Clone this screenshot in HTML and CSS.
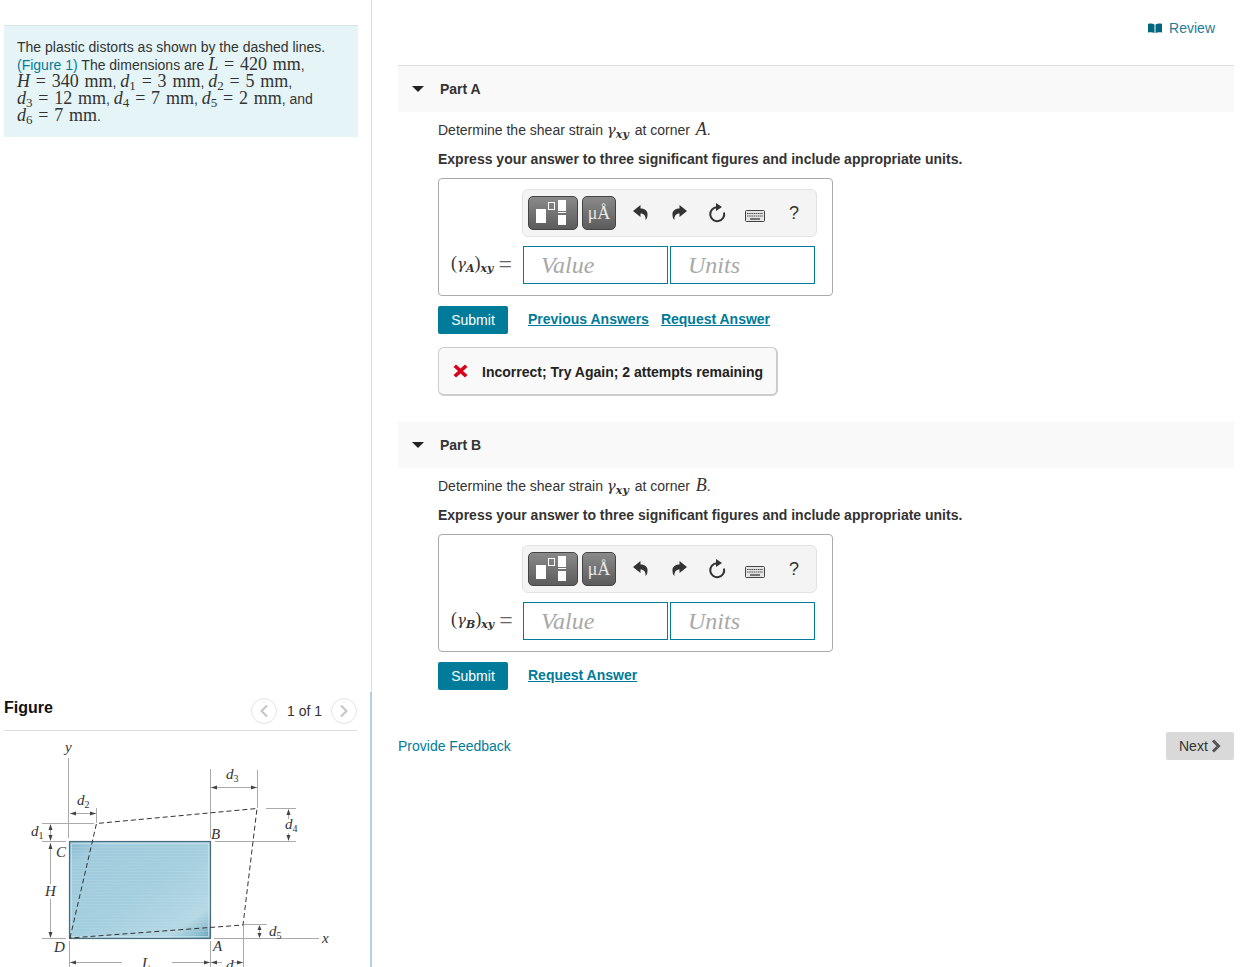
FILE: index.html
```html
<!DOCTYPE html>
<html lang="en">
<head>
    <meta charset="UTF-8">
    <title>Part A - Shear strain</title>
    <link rel="stylesheet" href="styles.css">
</head>
<body>
    <div class="page">
        <div class="left-col">
            <div class="intro">
                <div>The plastic distorts as shown by the dashed lines.</div>
                <div><a href="#" class="plain-link">(Figure 1)</a> The dimensions are <span class="m"><i>L</i> = 420 mm</span>,</div>
                <div><span class="m"><i>H</i> = 340 mm</span>, <span class="m"><i>d</i><sub>1</sub> = 3 mm</span>, <span class="m"><i>d</i><sub>2</sub> = 5 mm</span>,</div>
                <div><span class="m"><i>d</i><sub>3</sub> = 12 mm</span>, <span class="m"><i>d</i><sub>4</sub> = 7 mm</span>, <span class="m"><i>d</i><sub>5</sub> = 2 mm</span>, and</div>
                <div><span class="m"><i>d</i><sub>6</sub> = 7 mm</span>.</div>
            </div>

            <div class="figure-box">
                <div class="figure-head">
                    <h2>Figure</h2>
                    <div class="pager">
                        <span class="pager-btn"><svg width="10" height="14" viewBox="0 0 10 14"><path d="M8 1.500 2.500 7 8 12.500" fill="none" stroke="#c4c4c4" stroke-width="2"/></svg></span>
                        <span class="pager-text">1 of 1</span>
                        <span class="pager-btn"><svg width="10" height="14" viewBox="0 0 10 14"><path d="M2 1.500 7.500 7 2 12.500" fill="none" stroke="#c4c4c4" stroke-width="2"/></svg></span>
                    </div>
                </div>
                <svg class="diagram" width="368" height="227" viewBox="0 740 368 227">
                    <defs>
                        <linearGradient id="plate" x1="0" y1="0" x2="1" y2="1">
                            <stop offset="0" stop-color="#86b9ce"/>
                            <stop offset="0.12" stop-color="#9fcbdc"/>
                            <stop offset="0.5" stop-color="#a3cede"/>
                            <stop offset="0.84" stop-color="#b5d8e4"/>
                            <stop offset="0.93" stop-color="#8fbfd1"/>
                            <stop offset="1" stop-color="#5f9ab2"/>
                        </linearGradient>
                        <pattern id="grain" width="6" height="3" patternUnits="userSpaceOnUse">
                            <path d="M0 1.500H6" stroke="#c3e0ea" stroke-width="1" opacity="0.2"/>
                        </pattern>
                    </defs>
                    <rect x="70" y="842" width="140" height="96" fill="url(#plate)"/>
                    <rect x="70" y="842" width="140" height="96" fill="url(#grain)"/>
                    <rect x="71.500" y="843.500" width="137" height="93" fill="none" stroke="#c5e2eb" stroke-width="1" opacity="0.8"/>
                    <rect x="69.500" y="841.500" width="141" height="97" fill="none" stroke="#4a6c7c" stroke-width="1.200"/>
                    <g fill="none" stroke="#aaa" stroke-width="1">
                        <path d="M68.500 758V838M69.500 941V967M210.500 769V838M210.500 941V967M243.500 925V967M257.500 770V808M96.500 808V823"/>
                        <path d="M42 938.500H66M214 938.500H319M215 841.500H296M266 808.500H296M42 823.500H94M42 841.500H66M243 924.500H267"/>
                        <path d="M50.500 825V840M50.500 843V884M50.500 899V937M288.500 810V819M288.500 833V840M259.500 926V937"/>
                        <path d="M211 787.500H257M70 813.500H96M70 962.500H122M172 962.500H210M211 962.500H222M233 962.500H243"/>
                    </g>
                    <g fill="#444">
                        <path d="M211 787.500l6-2v4zM257 787.500l-6-2v4zM70 813.500l6-2v4zM96 813.500l-6-2v4zM50.500 824l-2 6h4zM50.500 841l-2-6h4zM50.500 843l-2 6h4zM50.500 938l-2-6h4zM288.500 809l-2 6h4zM288.500 841l-2-6h4zM259.500 925l-2 5h4zM259.500 938l-2-5h4zM70 962.500l6-2v4zM210 962.500l-6-2v4zM211 962.500l6-2v4zM243 962.500l-6-2v4z"/>
                    </g>
                    <path d="M70 938 96.500 823.500 257 808.500 243 925 70 938" fill="none" stroke="#333" stroke-width="1" stroke-dasharray="5 3"/>
                    <g class="fig-label">
                        <text x="65" y="752">y</text>
                        <text x="226" y="779">d<tspan class="fig-sub" dy="3">3</tspan></text>
                        <text x="77" y="805">d<tspan class="fig-sub" dy="3">2</tspan></text>
                        <text x="285" y="829">d<tspan class="fig-sub" dy="3">4</tspan></text>
                        <text x="31" y="836">d<tspan class="fig-sub" dy="3">1</tspan></text>
                        <text x="269" y="936">d<tspan class="fig-sub" dy="3">5</tspan></text>
                        <text x="211" y="839">B</text>
                        <text x="56" y="857">C</text>
                        <text x="45" y="896">H</text>
                        <text x="54" y="952">D</text>
                        <text x="213" y="951">A</text>
                        <text x="322" y="943">x</text>
                        <text x="142" y="968">L</text>
                        <text x="226" y="970">d</text>
                    </g>
                </svg>
            </div>
        </div>

        <div class="right-col">
            <div class="review-row">
                <a href="#" class="review-link">
                    <svg width="14" height="11" viewBox="0 0 14 11"><path d="M0 1c2-.6 4.500-.6 6.500 .4V10C4.500 9 2 9 0 9.600zM14 1c-2-.6-4.500-.6-6.500 .4V10c2-1 4.500-1 6.500-.4z" fill="#00677f"/></svg>
                    Review
                </a>
            </div>

            <div class="part-head"><span class="caret"></span>Part A</div>
            <div class="part-body">
                <p class="question">Determine the shear strain <span class="m gamma"><i>γ</i><sub><i>xy</i></sub></span> at corner <span class="m corner"><i>A</i></span>.</p>
                <p class="instruction">Express your answer to three significant figures and include appropriate units.</p>
                <div class="answer-box">
                    <div class="toolbar">
                        <button class="tool-btn tool-wide">
                            <svg width="36" height="28" viewBox="0 0 36 28"><path d="M1 10h10v14H1zM23 1h8v11h-8zM23 13h8v1h-8zM23 16h8v10h-8z" fill="#fff"/><rect x="13.500" y="3.500" width="6" height="7" fill="none" stroke="#fff"/></svg>
                        </button>
                        <button class="tool-btn tool-unit">μÅ</button>
                        <svg class="tool-undo" width="16" height="16" viewBox="0 0 16 16"><path d="M0 6 7.500 0V3.500C12 3.500 15 6 14.500 10 14.400 12 14 14 12.500 15 13 11 11 8.500 7.500 8.500V12z" fill="#333"/></svg>
                        <svg class="tool-redo" width="16" height="16" viewBox="0 0 16 16"><path d="M15 6 7.500 0V3.500C3 3.500 0 6 .5 10 .6 12 1 14 2.500 15 2 11 4 8.500 7.500 8.500V12z" fill="#333"/></svg>
                        <svg class="tool-reload" width="18" height="20" viewBox="0 0 18 20"><path d="M9 4.200a7 7 0 1 0 7 5.300" fill="none" stroke="#333" stroke-width="2"/><path d="M8 0 14 4 8 8z" fill="#333"/></svg>
                        <svg class="tool-keys" width="20" height="12" viewBox="0 0 20 12"><rect x=".5" y=".5" width="19" height="11" rx="1" fill="#e4e4e4" stroke="#444"/><path d="M2 3.500H18M2 6H18" stroke="#444" stroke-width="1.200" stroke-dasharray="1.500 .7"/><path d="M5 9H15" stroke="#444" stroke-width="1.400"/></svg>
                        <span class="tool-help">?</span>
                    </div>
                    <div class="answer-row">
                        <span class="answer-label m">(<i class="gamma-sym">γ</i><sub class="xy"><i>A</i></sub>)<sub class="xy"><i>xy</i></sub><span class="eq">=</span></span>
                        <input class="answer-input" type="text" placeholder="Value">
                        <input class="answer-input" type="text" placeholder="Units">
                    </div>
                </div>
                <div class="action-row">
                    <button class="submit-btn">Submit</button>
                    <a href="#" class="action-link">Previous Answers</a>
                    <a href="#" class="action-link">Request Answer</a>
                </div>
                <div class="feedback">
                    <svg width="15" height="14" viewBox="0 0 15 14"><path d="M3 .5 7.500 4.500 12 .5 14.500 3 10 7 14.500 11 12 13.500 7.500 9.500 3 13.500 .5 11 5 7 .5 3z" fill="#d9001b"/></svg>
                    <span>Incorrect; Try Again; 2 attempts remaining</span>
                </div>
            </div>

            <div class="part-head part-head-b"><span class="caret"></span>Part B</div>
            <div class="part-body">
                <p class="question">Determine the shear strain <span class="m gamma"><i>γ</i><sub><i>xy</i></sub></span> at corner <span class="m corner"><i>B</i></span>.</p>
                <p class="instruction">Express your answer to three significant figures and include appropriate units.</p>
                <div class="answer-box">
                    <div class="toolbar">
                        <button class="tool-btn tool-wide">
                            <svg width="36" height="28" viewBox="0 0 36 28"><path d="M1 10h10v14H1zM23 1h8v11h-8zM23 13h8v1h-8zM23 16h8v10h-8z" fill="#fff"/><rect x="13.500" y="3.500" width="6" height="7" fill="none" stroke="#fff"/></svg>
                        </button>
                        <button class="tool-btn tool-unit">μÅ</button>
                        <svg class="tool-undo" width="16" height="16" viewBox="0 0 16 16"><path d="M0 6 7.500 0V3.500C12 3.500 15 6 14.500 10 14.400 12 14 14 12.500 15 13 11 11 8.500 7.500 8.500V12z" fill="#333"/></svg>
                        <svg class="tool-redo" width="16" height="16" viewBox="0 0 16 16"><path d="M15 6 7.500 0V3.500C3 3.500 0 6 .5 10 .6 12 1 14 2.500 15 2 11 4 8.500 7.500 8.500V12z" fill="#333"/></svg>
                        <svg class="tool-reload" width="18" height="20" viewBox="0 0 18 20"><path d="M9 4.200a7 7 0 1 0 7 5.300" fill="none" stroke="#333" stroke-width="2"/><path d="M8 0 14 4 8 8z" fill="#333"/></svg>
                        <svg class="tool-keys" width="20" height="12" viewBox="0 0 20 12"><rect x=".5" y=".5" width="19" height="11" rx="1" fill="#e4e4e4" stroke="#444"/><path d="M2 3.500H18M2 6H18" stroke="#444" stroke-width="1.200" stroke-dasharray="1.500 .7"/><path d="M5 9H15" stroke="#444" stroke-width="1.400"/></svg>
                        <span class="tool-help">?</span>
                    </div>
                    <div class="answer-row">
                        <span class="answer-label m">(<i class="gamma-sym">γ</i><sub class="xy"><i>B</i></sub>)<sub class="xy"><i>xy</i></sub><span class="eq">=</span></span>
                        <input class="answer-input" type="text" placeholder="Value">
                        <input class="answer-input" type="text" placeholder="Units">
                    </div>
                </div>
                <div class="action-row">
                    <button class="submit-btn">Submit</button>
                    <a href="#" class="action-link">Request Answer</a>
                </div>
            </div>

            <div class="bottom-row">
                <a href="#" class="plain-link">Provide Feedback</a>
                <button class="next-btn">Next
                    <svg width="10" height="14" viewBox="0 0 10 14"><path d="M2 1.500 7.500 7 2 12.500" fill="none" stroke="#555" stroke-width="3"/></svg>
                </button>
            </div>
        </div>
    </div>
</body>
</html>
```

FILE: styles.css
```css
* {
    margin: 0;
    padding: 0;
    box-sizing: border-box;
}

html, body {
    height: 967px;
    overflow: hidden;
}

body {
    background: white;
    color: #333;
    font-family: "Liberation Sans", Arial, sans-serif;
    font-size: 14px;
}

.page {
    display: flex;
    height: 967px;
}

.plain-link {
    color: #007b9a;
    text-decoration: none;
}

.m {
    font-family: "Liberation Serif", "Times New Roman", serif;
    font-size: 18px;
}

.m sub {
    font-size: 13px;
    line-height: 0;
    vertical-align: -3px;
}

/* left column */
.left-col {
    width: 372px;
    flex: none;
    padding: 25px 0 0 4px;
    border-right: 1px solid #d5dde3;
}

.intro {
    height: 112px;
    margin-right: 13px;
    padding: 13px 13px 0;
    background: #e5f5f7;
    border-top: 1px solid #d5e3e6;
    line-height: 17px;
    white-space: nowrap;
}

.intro div {
    height: 17px;
}

.intro .m {
    word-spacing: 1.300px;
}

.figure-box {
    height: 275px;
    margin-top: 555px;
    margin-right: -1px;
    padding-right: 13px;
    border-right: 2px solid #b8cfe3;
}

.figure-head {
    display: flex;
    justify-content: space-between;
    align-items: center;
    height: 39px;
    border-bottom: 1px solid #ddd;
}

.figure-head h2 {
    font-size: 16px;
    color: #111;
    margin-top: -6px;
}

.pager {
    display: flex;
    align-items: center;
}

.pager-btn {
    width: 26px;
    height: 26px;
    border: 1px solid #e3e3e3;
    border-radius: 50%;
    display: flex;
    align-items: center;
    justify-content: center;
}

.pager-text {
    margin: 0 9px 0 10px;
}

.diagram {
    display: block;
    margin-left: -4px;
    margin-top: 9px;
}

.fig-label text {
    font-family: "Liberation Serif", serif;
    font-style: italic;
    font-size: 15px;
    fill: #333;
}

.fig-label .fig-sub {
    font-size: 10px;
    font-style: normal;
}

/* right column */
.right-col {
    flex: 1;
    padding: 0 26px 0 26px;
}

.review-row {
    height: 65px;
    padding: 20px 19px 0 0;
    text-align: right;
}

.review-link {
    color: #1f7c98;
    text-decoration: none;
}

.review-link svg {
    margin-right: 3px;
    vertical-align: -1px;
}

.part-head {
    display: flex;
    align-items: center;
    height: 47px;
    padding-left: 14px;
    background: #f9f9f9;
    border-top: 1px solid #ddd;
    font-weight: bold;
    color: #333;
}

.part-head-b {
    height: 46px;
    margin-top: 26px;
    border-top: 0;
}

.caret {
    width: 0;
    height: 0;
    margin-right: 16px;
    border-left: 6px solid transparent;
    border-right: 6px solid transparent;
    border-top: 6px solid #222;
}

.part-body {
    padding-left: 40px;
}

.question {
    height: 38px;
    padding-top: 7px;
    line-height: 20px;
    white-space: nowrap;
}

.question .gamma {
    margin-right: 2px;
    font-family: "DejaVu Serif", serif;
    font-size: 15px;
}

.question .gamma sub {
    font-family: "DejaVu Serif", serif;
    font-size: 11px;
    font-weight: bold;
}

.corner {
    margin-left: 2px;
}

.instruction {
    height: 28px;
    font-weight: bold;
    line-height: 18px;
}

.answer-box {
    width: 395px;
    height: 118px;
    padding: 10px 15px 0 11px;
    border: 1px solid #aaa;
    border-radius: 4px;
}

.toolbar {
    display: flex;
    align-items: center;
    width: 295px;
    height: 48px;
    margin-left: 72px;
    padding-left: 5px;
    background: #f4f4f4;
    border: 1px solid #e2e2e2;
    border-radius: 6px;
}

.tool-btn {
    height: 34px;
    color: #e8e8e8;
    background: linear-gradient(#8a8a8a, #5c5c5c);
    border: 1px solid #444;
    border-radius: 5px;
    display: flex;
    align-items: center;
    justify-content: center;
}

.tool-wide {
    width: 50px;
    margin-right: 4px;
}

.tool-unit {
    width: 34px;
    margin-right: 17px;
    font-family: "Liberation Serif", serif;
    font-size: 18px;
}

.tool-undo {
    margin-right: 23px;
}

.tool-redo {
    margin-right: 20px;
}

.tool-reload {
    margin-right: 19px;
}

.tool-keys {
    margin-top: 5px;
    margin-right: 24px;
}

.tool-help {
    font-size: 18px;
    color: #333;
}

.answer-row {
    display: flex;
    align-items: center;
    gap: 2px;
    margin-top: 9px;
}

.answer-label {
    width: 71px;
    flex: none;
    margin-top: -4px;
    padding-left: 1px;
    white-space: nowrap;
}

.gamma-sym {
    font-family: "DejaVu Serif", serif;
    font-size: 15px;
}

.answer-label .xy {
    font-family: "DejaVu Serif", serif;
    font-size: 11px;
    font-weight: bold;
}

.eq {
    margin-left: 5px;
    font-size: 24px;
    line-height: 0;
    vertical-align: -3px;
    color: #666;
}

.answer-input {
    width: 145px;
    height: 38px;
    padding-left: 17px;
    border: 1px solid #007b9a;
    border-radius: 0;
    outline: none;
    font-family: "Liberation Serif", serif;
    font-size: 24px;
    font-style: italic;
}

.answer-input::placeholder {
    color: #a8a8a8;
    opacity: 1;
}

.action-row {
    display: flex;
    align-items: center;
    gap: 12px;
    margin-top: 10px;
}

.submit-btn {
    width: 70px;
    height: 28px;
    margin-right: 8px;
    color: white;
    background: #007b9a;
    border: none;
    border-radius: 2px;
    font-family: inherit;
    font-size: 14px;
}

.action-link {
    color: #007b9a;
    font-weight: bold;
    margin-top: -2px;
}

.feedback {
    display: flex;
    align-items: center;
    gap: 14px;
    width: 340px;
    height: 49px;
    margin-top: 13px;
    padding-left: 14px;
    background: #f9f9f9;
    border: 1px solid #ccc;
    border-bottom-width: 2px;
    border-right-width: 2px;
    border-radius: 6px;
    font-weight: bold;
    color: #222;
}

.feedback span {
    margin-top: 2px;
}

.bottom-row {
    display: flex;
    justify-content: space-between;
    align-items: center;
    margin-top: 42px;
}

.next-btn {
    display: flex;
    align-items: center;
    gap: 3px;
    width: 68px;
    height: 28px;
    padding-left: 13px;
    color: #333;
    background: #d9d9d9;
    border: none;
    border-radius: 2px;
    font-family: inherit;
    font-size: 14px;
}
```
